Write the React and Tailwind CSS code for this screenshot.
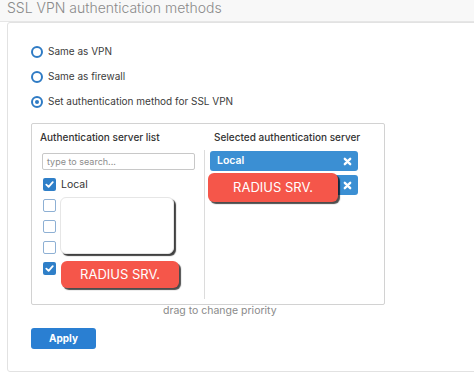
import React from 'react';

const font = { fontFamily: 'Inter, "Open Sans", sans-serif' };

const Radio = ({ checked, label }) => (
  <div className="flex items-center h-[25px] gap-[5px]">
    <span className="w-[12px] h-[12px] rounded-full border-2 border-[#2f7bc4] flex items-center justify-center">
      {checked && <span className="w-[4px] h-[4px] rounded-full bg-[#2f7bc4]" />}
    </span>
    <span className="text-[10px] text-[#3c3c3c]">{label}</span>
  </div>
);

const Check = ({ checked }) =>
  checked ? (
    <span className="w-[13px] h-[13px] rounded-[2px] bg-[#2f7fc8] flex items-center justify-center">
      <svg width="9" height="9" viewBox="0 0 10 10">
        <path d="M1.5 5.2 L4 7.6 L8.6 2.4" stroke="white" strokeWidth="2" fill="none" strokeLinecap="round" strokeLinejoin="round" />
      </svg>
    </span>
  ) : (
    <span className="w-[13px] h-[13px] rounded-[2px] border border-[#8eb0d4] bg-white" />
  );

const CloseX = () => (
  <svg width="9" height="9" viewBox="0 0 10 10">
    <path d="M2 2 L8 8 M8 2 L2 8" stroke="white" strokeWidth="2.6" strokeLinecap="round" />
  </svg>
);

// chips in the selected list; the second one's label sits under the dragged item
const Chip = ({ label }) => (
  <div className="w-[148px] h-[20px] rounded-[3px] bg-[#3b8fd3] flex items-center justify-between pl-[7px] pr-[6px]">
    <span className="text-[10.5px] font-semibold text-white">{label}</span>
    <CloseX />
  </div>
);

const servers = [
  { id: 1, name: 'Local', checked: true },
  { id: 2, name: '', checked: false },
  { id: 3, name: '', checked: false },
  { id: 4, name: '', checked: false },
  { id: 5, name: '', checked: true },
];

export default function App() {
  return (
    <div className="relative w-[474px] h-[376px] bg-white overflow-hidden" style={font}>
      {/* page title band */}
      <div className="h-[22px] bg-[#f8f8f8] border-b border-[#e6e6e6] pl-[7px] pt-[1px]">
        <div className="text-[14px] leading-[14px] font-light text-[#8a8a8a]">SSL VPN authentication methods</div>
      </div>

      <div className="ml-[7px] w-[475px] h-[350px] border border-[#e2e2e2] rounded-[3px] pl-[23px] pt-[16px]">
        <Radio label="Same as VPN" />
        <Radio label="Same as firewall" />
        <Radio checked label="Set authentication method for SSL VPN" />

        <div className="mt-[9px] w-[354px] h-[182px] border border-[#d2d2d2] rounded-[2px]">
          <div className="flex h-[26px] items-center">
            <div className="w-[173px] pl-[8px] text-[10px] font-medium text-[#333]">Authentication server list</div>
            <div className="pl-[9px] text-[10px] font-medium text-[#333]">Selected authentication server</div>
          </div>
          <div className="flex h-[149px]">
            <div className="w-[173px] border-r border-[#dcdcdc]">
              <div className="ml-[10px] mt-[3px] w-[153px] h-[17px] border border-[#c8c8c8] rounded-[2px] flex items-center pl-[4px]">
                <span className="text-[9px] text-[#8c8c8c]">type to search...</span>
              </div>
              <div className="mt-[4px]">
                {servers.map((s) => (
                  <div key={s.id} className="h-[21px] flex items-center pl-[11px] gap-[5px]">
                    <Check checked={s.checked} />
                    <span className="text-[10.5px] text-[#333]">{s.name}</span>
                  </div>
                ))}
              </div>
            </div>
            <div className="pl-[5px] pt-[1px] flex flex-col gap-[4px]">
              <Chip label="Local" />
              <Chip label="" />
            </div>
          </div>
        </div>

        <div className="pl-[132px] h-[12px] text-[10.5px] leading-[12px] text-[#8a8a8a]">drag to change priority</div>

        <button className="mt-[11px] w-[65px] h-[21px] rounded-[3px] bg-[#2a7fd2] text-white text-[10px] font-bold">
          Apply
        </button>
      </div>

      {/* dragged items floating over the lists */}
      <div className="absolute left-[60px] top-[197px] w-[114px] h-[57px] rounded-[6px] bg-white border border-[#e6e6e6] shadow-[2px_2px_1px_rgba(0,0,0,0.75)]" />
      <div className="absolute left-[61px] top-[261px] w-[118px] h-[27px] rounded-[6px] bg-[#f5564a] shadow-[2px_2px_1px_rgba(0,0,0,0.7)] flex items-center justify-center text-white text-[13px]">
        RADIUS SRV.
      </div>
      <div className="absolute left-[208px] top-[173px] w-[130px] h-[29px] rounded-[6px] bg-[#f5564a] shadow-[2px_2px_1px_rgba(0,0,0,0.7)] flex items-center justify-center text-white text-[13px]">
        RADIUS SRV.
      </div>
    </div>
  );
}
